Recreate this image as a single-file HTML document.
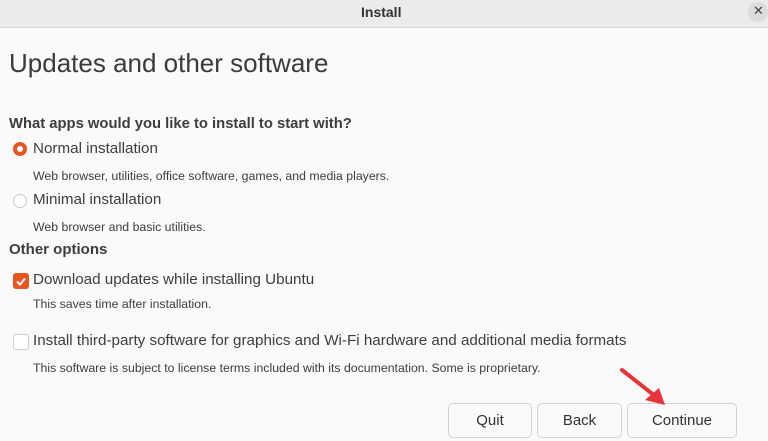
<!DOCTYPE html><html><head><style>
body{margin:0;width:768px;height:441px;background:#fafafa;font-family:"Liberation Sans",sans-serif;color:#3d3d3d;position:relative;overflow:hidden}
.t{position:absolute;white-space:nowrap;line-height:1}
.bar{position:absolute;left:0;top:0;width:768px;height:27px;background:#ebebeb;border-bottom:1px solid #d6d6d6}
.btn{position:absolute;top:403px;height:33px;border:1px solid #d4d4d4;border-radius:5px;background:#fafafa;font-size:15px;text-align:center;line-height:33px;color:#333}
.rad{position:absolute;left:13px;width:14px;height:14px;border-radius:50%;box-sizing:border-box}
.chk{position:absolute;left:13px;width:16px;height:16px;border-radius:3px;box-sizing:border-box}
.m{font-size:15.2px}
.s{font-size:12.3px}
</style></head><body>
<div class="bar"></div>
<div class="t" style="left:361px;top:5px;font-size:14px;font-weight:bold;color:#333">Install</div>
<div style="position:absolute;left:748px;top:2px;width:20px;height:20px;border-radius:50%;background:#dcdcdc"></div>
<div class="t" style="left:753px;top:4px;font-size:13px;color:#444">✕</div>
<div class="t" style="left:9px;top:50px;font-size:26px;color:#3a3a3a">Updates and other software</div>
<div class="t" style="left:9px;top:117px;font-size:14.8px;font-weight:bold">What apps would you like to install to start with?</div>
<div class="rad" style="top:142px;background:#e95420"><div style="position:absolute;left:4px;top:4px;width:6px;height:6px;border-radius:50%;background:#fff"></div></div>
<div class="t m" style="left:33px;top:141px">Normal installation</div>
<div class="t s" style="left:33px;top:170px">Web browser, utilities, office software, games, and media players.</div>
<div class="rad" style="top:194px;border:1px solid #ccc;background:#fff"></div>
<div class="t m" style="left:33px;top:192px">Minimal installation</div>
<div class="t s" style="left:33px;top:221px">Web browser and basic utilities.</div>
<div class="t" style="left:9px;top:242px;font-size:15px;font-weight:bold">Other options</div>
<div class="chk" style="top:273px;background:#e95420"><svg width="16" height="16" style="position:absolute;left:0;top:0"><path d="M4 8.5l3 3 5-6" stroke="#fff" stroke-width="2" fill="none"/></svg></div>
<div class="t m" style="left:33px;top:272px">Download updates while installing Ubuntu</div>
<div class="t s" style="left:33px;top:298px">This saves time after installation.</div>
<div class="chk" style="top:334px;border:1px solid #ccc;background:#fff"></div>
<div class="t m" style="left:33px;top:333px">Install third-party software for graphics and Wi-Fi hardware and additional media formats</div>
<div class="t s" style="left:33px;top:362px">This software is subject to license terms included with its documentation. Some is proprietary.</div>
<div class="btn" style="left:448px;width:82px">Quit</div>
<div class="btn" style="left:537px;width:83px">Back</div>
<div class="btn" style="left:627px;width:108px">Continue</div>
<svg width="768" height="441" style="position:absolute;left:0;top:0">
<line x1="622" y1="370" x2="655" y2="396" stroke="#e8333a" stroke-width="4" stroke-linecap="round"/>
<polygon points="665,405 645,400 659,388" fill="#e8333a"/>
</svg>
</body></html>
